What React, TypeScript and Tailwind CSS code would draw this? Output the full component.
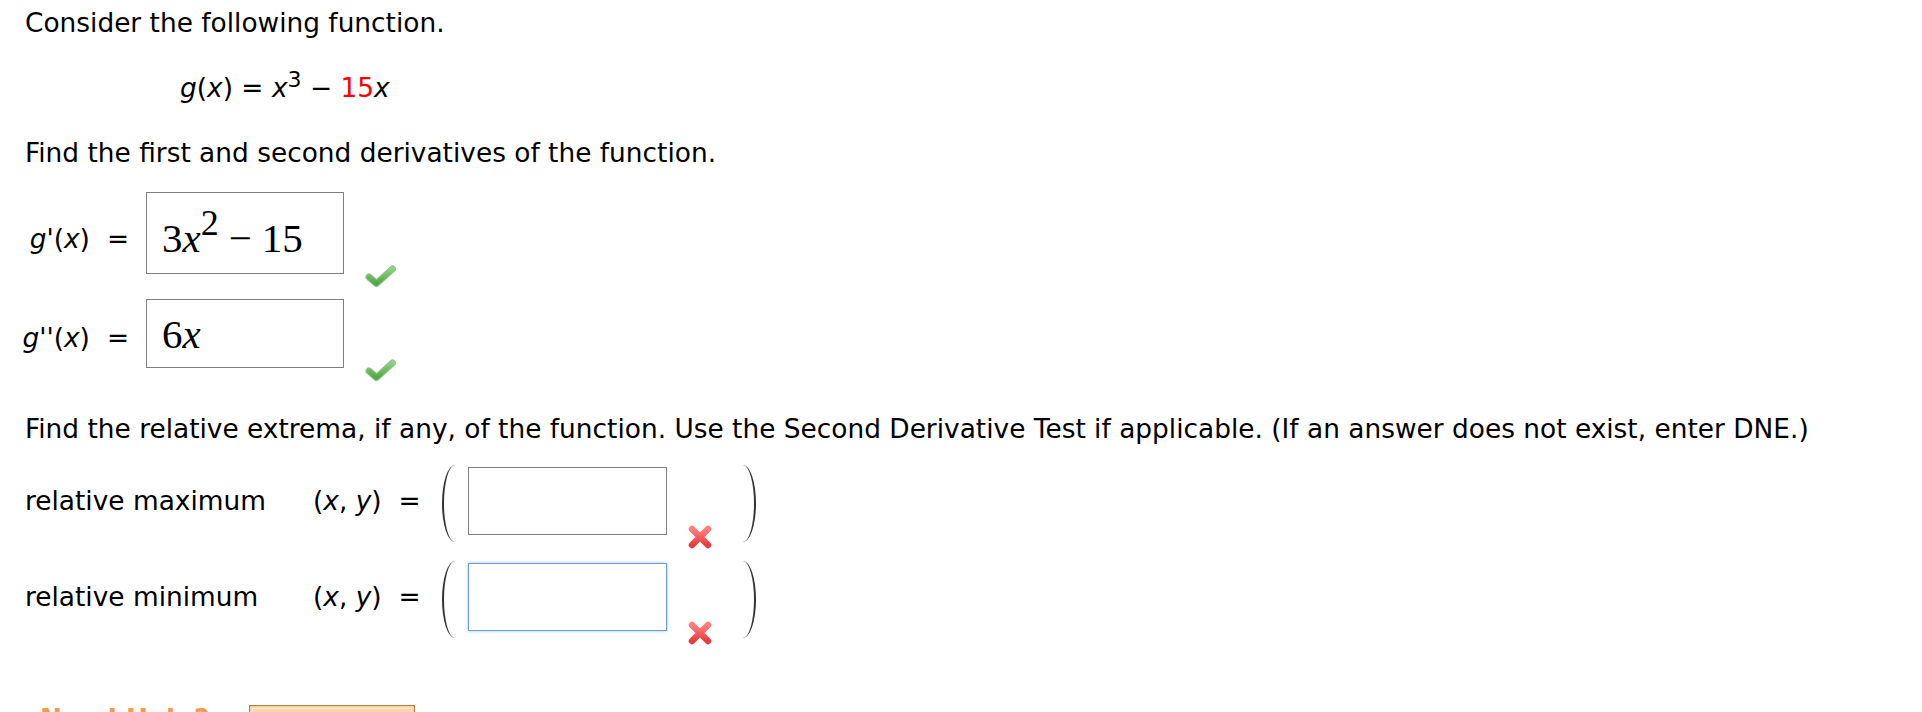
import React from "react";

const Check = () => (
  <svg width="31" height="24" viewBox="0 0 31 24">
    <defs>
      <linearGradient id="chk" x1="0" y1="0" x2="0" y2="1">
        <stop offset="0" stopColor="#8fd17f" />
        <stop offset="1" stopColor="#4fa843" />
      </linearGradient>
    </defs>
    <path
      d="M4 13 L11.5 19.5 L27.5 5"
      fill="none"
      stroke="#3f8f36"
      strokeWidth="7"
      strokeLinecap="round"
      strokeLinejoin="round"
      opacity="0.55"
    />
    <path
      d="M4 13 L11.5 19.5 L27.5 5"
      fill="none"
      stroke="url(#chk)"
      strokeWidth="5"
      strokeLinecap="round"
      strokeLinejoin="round"
    />
  </svg>
);

const Cross = () => (
  <svg width="26" height="26" viewBox="0 0 26 26">
    <defs>
      <linearGradient id="crs" x1="0" y1="0" x2="0" y2="1">
        <stop offset="0" stopColor="#ff8080" />
        <stop offset="1" stopColor="#e63c3c" />
      </linearGradient>
    </defs>
    <path
      d="M5 5 L21 21 M21 5 L5 21"
      fill="none"
      stroke="url(#crs)"
      strokeWidth="6.5"
      strokeLinecap="round"
    />
  </svg>
);

// stretchy delimiters drawn as crescents
const LeftParen = () => (
  <div className="w-[26px] h-[77px] shrink-0 rounded-[50%] border-l-[2px] border-[#333]" />
);
const RightParen = () => (
  <div className="w-[26px] h-[77px] shrink-0 rounded-[50%] border-r-[2px] border-[#333]" />
);

const MathBox = ({ h, pt, children }: { h: string; pt: string; children?: React.ReactNode }) => (
  <div
    className={`w-[198px] ${h} ${pt} pl-[15px] border border-[#808080] bg-white font-['Liberation_Serif',serif] text-[41px] leading-none whitespace-nowrap`}
  >
    {children}
  </div>
);

const ExtremaRow = ({ label, focused }: { label: string; focused?: boolean }) => (
  <div className="flex items-start">
    <div className="w-[288px] h-[40px] leading-[40px] mt-[16px]">{label}</div>
    <div className="w-[129px] h-[40px] leading-[40px] mt-[16px] whitespace-nowrap">
      (<i>x</i>, <i>y</i>)&nbsp; =
    </div>
    <LeftParen />
    <div
      className={`w-[199px] h-[68px] mt-[2px] bg-white ${
        focused
          ? "border border-[#6b9fd3] shadow-[0_0_3px_#9cc3ea]"
          : "border border-[#808080]"
      }`}
    />
    <div className="ml-[20px] mt-[59px]">
      <Cross />
    </div>
    <div className="ml-[17px]">
      <RightParen />
    </div>
  </div>
);

export default function App() {
  return (
    <div className="w-[1922px] h-[712px] overflow-hidden bg-white text-black font-['DejaVu_Sans',sans-serif] text-[26.4px] pl-[25px] pt-[3px]">
      <div className="flex flex-col gap-[25px]">
        <p className="h-[40px] leading-[40px]">Consider the following function.</p>
        <p className="h-[40px] leading-[40px] pl-[155px] whitespace-nowrap">
          <i>g</i>(<i>x</i>) = <i>x</i>
          <span className="relative -top-[10px] text-[22px] leading-none">3</span> &minus;{" "}
          <span className="text-[#ff0000]">15</span>
          <i>x</i>
        </p>
        <p className="h-[40px] leading-[40px]">Find the first and second derivatives of the function.</p>
      </div>

      {/* g'(x) */}
      <div className="flex items-start mt-[19px]">
        <div className="w-[121px] h-[40px] leading-[40px] mt-[27px] flex justify-end pr-[17px] whitespace-nowrap">
          <i>g'</i>(<i>x</i>)
          <span className="ml-[17px]">=</span>
        </div>
        <MathBox h="h-[82px]" pt="pt-[25px]">
          3<i>x</i>
          <span className="relative -top-[17px] text-[36px]">2</span>
          <span className="mx-[10px]">&minus;</span>15
        </MathBox>
        <div className="ml-[21px] mt-[72px]">
          <Check />
        </div>
      </div>

      {/* g''(x) */}
      <div className="flex items-start mt-[11px]">
        <div className="w-[121px] h-[40px] leading-[40px] mt-[19px] flex justify-end pr-[17px] whitespace-nowrap">
          <i>g''</i>(<i>x</i>)
          <span className="ml-[17px]">=</span>
        </div>
        <MathBox h="h-[69px]" pt="pt-[14px]">
          6<i>x</i>
        </MathBox>
        <div className="ml-[21px] mt-[59px]">
          <Check />
        </div>
      </div>

      <p className="h-[40px] leading-[40px] mt-[27px] whitespace-nowrap">
        Find the relative extrema, if any, of the function. Use the Second Derivative Test if
        applicable. (If an answer does not exist, enter DNE.)
      </p>

      <div className="mt-[16px] flex flex-col gap-[11px]">
        <ExtremaRow label="relative maximum" />
        <ExtremaRow label="relative minimum" focused />
      </div>

      <div className="flex items-start mt-[59px]">
        <span className="ml-[15px] -mt-[6px] font-bold text-[#f59a4e] leading-[40px] whitespace-nowrap">
          Need Help?
        </span>
        <div className="ml-[40px] w-[166px] h-[44px] border border-[#b8743a] bg-[#fcd4a8] p-[2px]">
          <div className="w-full h-full border border-[#fff1e0] flex items-center justify-center text-[#7a3f0f] text-[22px]">
            Read It
          </div>
        </div>
      </div>
    </div>
  );
}
